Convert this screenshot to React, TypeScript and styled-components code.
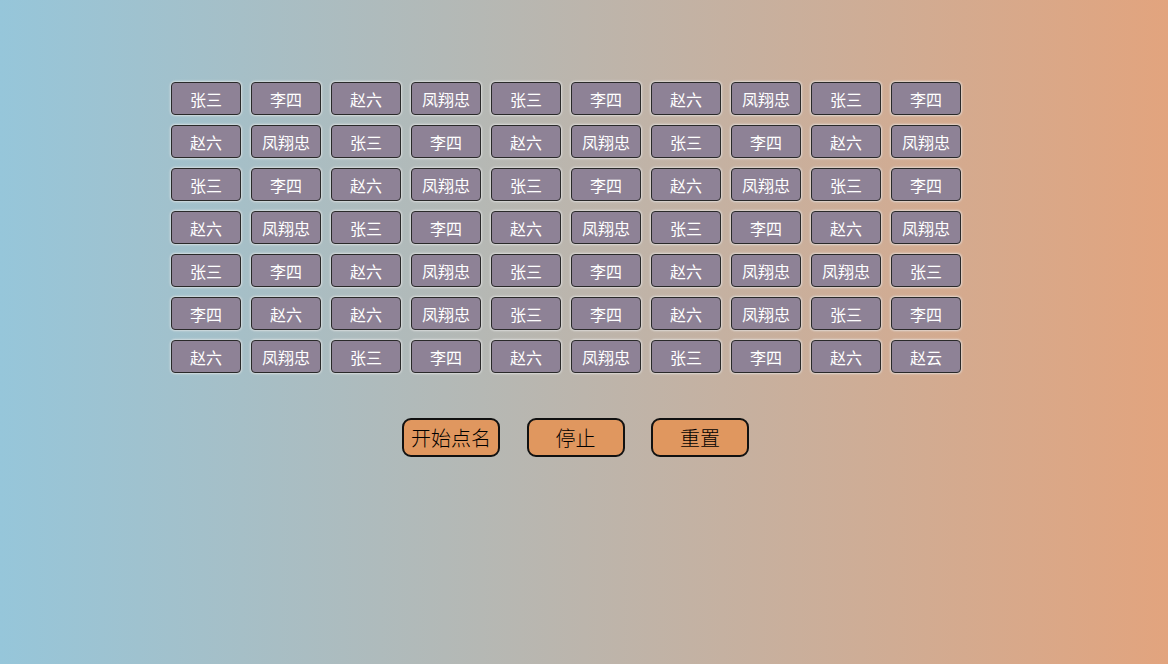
import React from "react";
import styled, { createGlobalStyle } from "styled-components";

const GlobalStyle = createGlobalStyle`
  html, body {
    margin: 0;
    padding: 0;
  }
  body {
    font-family: "Noto Sans CJK SC", "Noto Sans", sans-serif;
  }
`;

const rows: string[][] = [
  ["张三", "李四", "赵六", "凤翔忠", "张三", "李四", "赵六", "凤翔忠", "张三", "李四"],
  ["赵六", "凤翔忠", "张三", "李四", "赵六", "凤翔忠", "张三", "李四", "赵六", "凤翔忠"],
  ["张三", "李四", "赵六", "凤翔忠", "张三", "李四", "赵六", "凤翔忠", "张三", "李四"],
  ["赵六", "凤翔忠", "张三", "李四", "赵六", "凤翔忠", "张三", "李四", "赵六", "凤翔忠"],
  ["张三", "李四", "赵六", "凤翔忠", "张三", "李四", "赵六", "凤翔忠", "凤翔忠", "张三"],
  ["李四", "赵六", "赵六", "凤翔忠", "张三", "李四", "赵六", "凤翔忠", "张三", "李四"],
  ["赵六", "凤翔忠", "张三", "李四", "赵六", "凤翔忠", "张三", "李四", "赵六", "赵云"],
];

const Page = styled.div`
  min-height: 100vh;
  width: 100%;
  overflow: hidden;
  background: linear-gradient(to right, #96c6da, #e2a47e);
  padding-top: 77px;
  box-sizing: border-box;
`;

const NameGrid = styled.div`
  display: flex;
  flex-wrap: wrap;
  width: 800px;
  margin-left: 166px;
`;

const NameCell = styled.div`
  width: 70px;
  height: 33px;
  margin: 5px;
  box-sizing: border-box;
  display: flex;
  align-items: center;
  justify-content: center;
  background: #8e8296;
  border: 1px solid #2a2a2a;
  border-radius: 4px;
  box-shadow: 0 0 2px 1px rgba(235, 235, 235, 0.7);
  color: #fff;
  font-size: 16px;
`;

const Controls = styled.div`
  display: flex;
  gap: 26.5px;
  margin-left: 402px;
  margin-top: 40px;
`;

const ActionButton = styled.button`
  width: 98px;
  height: 39px;
  box-sizing: border-box;
  background: #e0975f;
  border: 2px solid #111;
  border-radius: 9px;
  color: #000;
  font-family: "Noto Sans CJK SC", "Noto Sans", sans-serif;
  font-size: 20px;
  font-weight: 300;
  padding: 0;
  cursor: pointer;
`;

export default function App() {
  return (
    <Page>
      <GlobalStyle />
      <NameGrid>
        {rows.flat().map((name, i) => (
          <NameCell key={i}>{name}</NameCell>
        ))}
      </NameGrid>
      <Controls>
        <ActionButton>开始点名</ActionButton>
        <ActionButton>停止</ActionButton>
        <ActionButton>重置</ActionButton>
      </Controls>
    </Page>
  );
}
